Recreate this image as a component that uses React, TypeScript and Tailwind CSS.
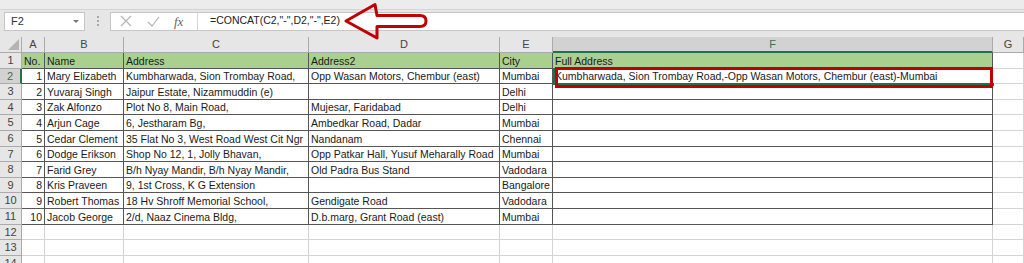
import React from 'react';

const colWidths = ['A', 'B', 'C', 'D', 'E', 'F', 'G'];

const rows: string[][] = [
  ['No.', 'Name', 'Address', 'Address2', 'City', 'Full Address'],
  ['1', 'Mary Elizabeth', 'Kumbharwada, Sion Trombay Road,', 'Opp Wasan Motors, Chembur (east)', 'Mumbai', 'Kumbharwada, Sion Trombay Road,-Opp Wasan Motors, Chembur (east)-Mumbai'],
  ['2', 'Yuvaraj Singh', 'Jaipur Estate, Nizammuddin (e)', '', 'Delhi', ''],
  ['3', 'Zak Alfonzo', 'Plot No 8, Main Road,', 'Mujesar, Faridabad', 'Delhi', ''],
  ['4', 'Arjun Cage', '6, Jestharam Bg,', 'Ambedkar Road, Dadar', 'Mumbai', ''],
  ['5', 'Cedar Clement', '35 Flat No 3, West Road West Cit Ngr', 'Nandanam', 'Chennai', ''],
  ['6', 'Dodge Erikson', 'Shop No 12, 1, Jolly Bhavan,', 'Opp Patkar Hall, Yusuf Meharally Road', 'Mumbai', ''],
  ['7', 'Farid Grey', 'B/h Nyay Mandir, B/h Nyay Mandir,', 'Old Padra Bus Stand', 'Vadodara', ''],
  ['8', 'Kris Praveen', '9, 1st Cross, K G Extension', '', 'Bangalore', ''],
  ['9', 'Robert Thomas', '18 Hv Shroff Memorial School,', 'Gendigate Road', 'Vadodara', ''],
  ['10', 'Jacob George', '2/d, Naaz Cinema Bldg,', 'D.b.marg, Grant Road (east)', 'Mumbai', ''],
];

const FormulaBar = () => (
  <div className="h-[37px] bg-[#e6e6e6] flex flex-col">
    <div className="h-[10px] bg-[#ececec] border-b border-[#d4d4d4]" />
    <div className="flex items-center mt-[1px] h-[20px]">
      <div className="ml-[4px] w-[81px] h-[19px] bg-white border border-[#c6c6c6] flex items-center justify-between pl-[6px] pr-[5px]">
        <span className="text-[11px] text-[#333]">F2</span>
        <span className="w-0 h-0 border-l-[3px] border-r-[3px] border-t-[3px] border-l-transparent border-r-transparent border-t-[#777]" />
      </div>
      <div className="w-[25px] flex flex-col items-center gap-[2px]">
        <span className="w-[2px] h-[2px] bg-[#a8a8a8]" />
        <span className="w-[2px] h-[2px] bg-[#a8a8a8]" />
        <span className="w-[2px] h-[2px] bg-[#a8a8a8]" />
      </div>
      <div className="flex-1 h-[19px] bg-white border-y border-l border-[#c6c6c6] flex items-center">
        <div className="w-[87px] flex items-center h-full border-r border-[#d6d6d6]">
          <svg width="12" height="12" viewBox="0 0 12 12" className="ml-[9px]">
            <path d="M1 1L11 11M11 1L1 11" stroke="#b5b5b5" strokeWidth="1.2" fill="none" />
          </svg>
          <svg width="13" height="11" viewBox="0 0 13 11" className="ml-[15px]">
            <path d="M1 6L5 10L12 1" stroke="#b5b5b5" strokeWidth="1.2" fill="none" />
          </svg>
          <span className="ml-[14px] text-[13px] italic text-[#666] font-['Liberation_Serif',serif] leading-none">fx</span>
        </div>
        <span className="pl-[12px] text-[10.5px] text-[#222]">=CONCAT(C2,"-",D2,"-",E2)</span>
      </div>
    </div>
  </div>
);

export default function App() {
  const grid = 'grid grid-cols-[22px_23px_79px_185px_191px_53px_440px_31px] grid-rows-[16px_repeat(14,15.6px)]';

  return (
    <div className="w-[1024px] h-[263px] overflow-hidden bg-white relative font-['Liberation_Sans',Arial,sans-serif]">
      <FormulaBar />

      <div className={grid}>
        {/* corner */}
        <div className="bg-[#e6e6e6] border-r border-b border-[#ababab] flex items-end justify-end pr-[2px] pb-[2px]">
          <span className="w-0 h-0 border-l-[11px] border-b-[11px] border-l-transparent border-b-[#b4b4b4]" />
        </div>
        {colWidths.map((c) => (
          <div
            key={c}
            className={
              c === 'F'
                ? 'bg-[#d2d2d2] border-r border-[#ababab] border-b-2 border-b-[#217346] flex items-center justify-center text-[11px] text-[#3f6f55]'
                : 'bg-[#e6e6e6] border-r border-b border-[#ababab] flex items-center justify-center text-[11px] text-[#444]'
            }
          >
            {c}
          </div>
        ))}

        {Array.from({ length: 14 }).map((_, r) => {
          const data = rows[r];
          const inTable = r < 11;
          const rowNo = r + 1;
          return (
            <React.Fragment key={r}>
              <div
                className={
                  rowNo === 2
                    ? 'bg-[#d2d2d2] border-r-2 border-r-[#217346] border-b border-b-[#ababab] flex items-center justify-center text-[11px] text-[#3f6f55]'
                    : 'bg-[#e6e6e6] border-r border-b border-[#ababab] flex items-center justify-center text-[11px] text-[#444]'
                }
              >
                {rowNo}
              </div>
              {colWidths.map((c, ci) => {
                const tableCell = inTable && ci < 6;
                const value = data && ci < 6 ? data[ci] : '';
                const base = tableCell
                  ? 'border-r border-b border-[#555]'
                  : 'border-r border-b border-[#d4d4d4]';
                const fill = r === 0 && ci < 6 ? 'bg-[#a9d08e]' : 'bg-white';
                const align = ci === 0 && r > 0 ? 'justify-end pr-[2px]' : 'justify-start pl-[2px]';
                return (
                  <div
                    key={c}
                    className={`${base} ${fill} ${align} flex items-end pb-[1px] text-[10.5px] leading-[12px] text-[#1a1a1a] whitespace-nowrap`}
                  >
                    {value}
                  </div>
                );
              })}
            </React.Fragment>
          );
        })}
      </div>

      {/* selected cell */}
      <div className="absolute left-[553px] top-[68px] w-[440px] h-[17px] border-2 border-[#217346] pointer-events-none" />
      <div className="absolute left-[990px] top-[82px] w-[5px] h-[5px] bg-[#217346] border border-white" />

      {/* annotation box */}
      <div className="absolute left-[555px] top-[67px] w-[438px] h-[21px] border-[3px] border-[#c00000]" />

      {/* annotation arrow */}
      <svg className="absolute left-[340px] top-0" width="92" height="42" viewBox="340 0 92 42">
        <path
          d="M346 21 L375 4.5 L377 15.5 L420 15.5 Q426 15.5 426 21 Q426 26.5 420 26.5 L377 26.5 L377 38 Z"
          fill="none"
          stroke="#c00000"
          strokeWidth="3"
          strokeLinejoin="round"
        />
      </svg>
    </div>
  );
}
